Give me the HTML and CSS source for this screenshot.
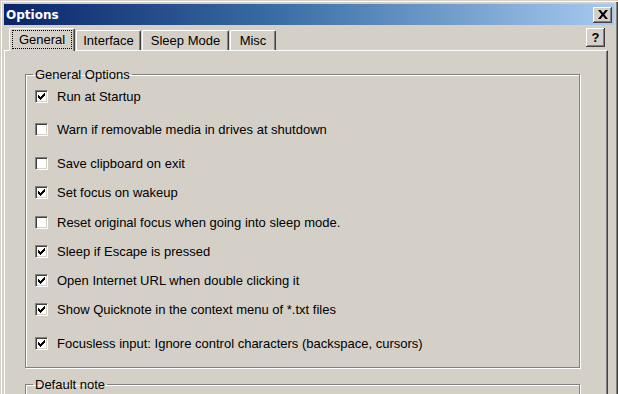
FILE: index.html
```html
<!DOCTYPE html>
<html>
<head>
<meta charset="utf-8">
<title>Options</title>
<link rel="stylesheet" href="styles.css">
</head>
<body>
<div class="window">
  <div class="titlebar">
    <span class="title">Options</span>
    <button class="tb-btn close" aria-label="Close">
      <svg width="10" height="9" viewBox="0 0 10 9"><path d="M0 0h2.6L5 3 7.4 0H10L6.4 4.5 10 9H7.4L5 6 2.6 9H0l3.6-4.5z" fill="#000"/></svg>
    </button>
  </div>
  <div class="client">
    <div class="tabrow">
      <div class="tab active tab-general"><span class="focus">General</span></div>
      <div class="tab tab-interface">Interface</div>
      <div class="tab tab-sleep">Sleep Mode</div>
      <div class="tab tab-misc">Misc</div>
      <button class="help" aria-label="Help">?</button>
    </div>
    <div class="panel">
      <fieldset class="group">
        <legend>General Options</legend>
        <div class="row"><span class="cb checked"><svg width="7" height="7" viewBox="0 0 7 7"><path d="M6 0H7V3H6V4H5V5H4V6H3V7H2V6H1V5H0V2H1V3H2V4H3V3H4V2H5V1H6Z" fill="#000"/></svg></span><span>Run at Startup</span></div>
        <div class="row sp4"><span class="cb"></span><span>Warn if removable media in drives at shutdown</span></div>
        <div class="row sp5"><span class="cb"></span><span>Save clipboard on exit</span></div>
        <div class="row"><span class="cb checked"><svg width="7" height="7" viewBox="0 0 7 7"><path d="M6 0H7V3H6V4H5V5H4V6H3V7H2V6H1V5H0V2H1V3H2V4H3V3H4V2H5V1H6Z" fill="#000"/></svg></span><span>Set focus on wakeup</span></div>
        <div class="row sp1"><span class="cb"></span><span>Reset original focus when going into sleep mode.</span></div>
        <div class="row"><span class="cb checked"><svg width="7" height="7" viewBox="0 0 7 7"><path d="M6 0H7V3H6V4H5V5H4V6H3V7H2V6H1V5H0V2H1V3H2V4H3V3H4V2H5V1H6Z" fill="#000"/></svg></span><span>Sleep if Escape is pressed</span></div>
        <div class="row"><span class="cb checked"><svg width="7" height="7" viewBox="0 0 7 7"><path d="M6 0H7V3H6V4H5V5H4V6H3V7H2V6H1V5H0V2H1V3H2V4H3V3H4V2H5V1H6Z" fill="#000"/></svg></span><span>Open Internet URL when double clicking it</span></div>
        <div class="row"><span class="cb checked"><svg width="7" height="7" viewBox="0 0 7 7"><path d="M6 0H7V3H6V4H5V5H4V6H3V7H2V6H1V5H0V2H1V3H2V4H3V3H4V2H5V1H6Z" fill="#000"/></svg></span><span>Show Quicknote in the context menu of *.txt files</span></div>
        <div class="row sp5"><span class="cb checked"><svg width="7" height="7" viewBox="0 0 7 7"><path d="M6 0H7V3H6V4H5V5H4V6H3V7H2V6H1V5H0V2H1V3H2V4H3V3H4V2H5V1H6Z" fill="#000"/></svg></span><span>Focusless input: Ignore control characters (backspace, cursors)</span></div>
      </fieldset>
      <fieldset class="group note">
        <legend>Default note</legend>
      </fieldset>
    </div>
  </div>
</div>
</body>
</html>
```
FILE: styles.css
```css
html, body {
  margin: 0;
  padding: 0;
  background: #d4d0c8;
}
body {
  font-family: "Liberation Sans", Arial, sans-serif;
  font-size: 13px;
  color: #000;
}
.window {
  width: 618px;
  height: 394px;
  box-sizing: border-box;
  padding: 4px 4px 0 4px;
  background: #d4d0c8;
  box-shadow: inset 1px 1px #d4d0c8, inset 2px 2px #fff, inset -1px 0 #404040, inset -2px 0 #808080;
  display: flex;
  flex-direction: column;
  overflow: hidden;
}
.titlebar {
  height: 21px;
  flex: none;
  display: flex;
  align-items: center;
  padding: 0 2px 0 2px;
  background: linear-gradient(to right, #0a246a 0%, #3a6ea5 45%, #a6caf0 100%);
}
.title {
  font-family: "DejaVu Sans", Verdana, sans-serif;
  font-weight: bold;
  font-size: 12px;
  color: #fff;
  flex: 1;
}
.tb-btn {
  width: 19px;
  height: 16px;
  padding: 0;
  margin: 0;
  border: 0;
  background: #d4d0c8;
  box-shadow: inset -1px -1px #404040, inset 1px 1px #fff, inset -2px -2px #808080;
  display: flex;
  align-items: center;
  justify-content: center;
}
.client {
  flex: 1;
  display: flex;
  flex-direction: column;
  margin-right: 6px;
}
.tabrow {
  height: 25px;
  flex: none;
  display: flex;
  align-items: flex-end;
  padding-left: 5px;
}
.tab {
  height: 20px;
  box-sizing: border-box;
  border-top: 1px solid #fff;
  border-left: 1px solid #fff;
  border-right: 1px solid #404040;
  border-radius: 2px 2px 0 0;
  box-shadow: inset -1px 0 #808080;
  display: flex;
  align-items: center;
  justify-content: center;
  padding-bottom: 1px;
  margin-right: 1px;
}
.tab.active {
  height: 23px;
  margin-bottom: -1px;
  position: relative;
  z-index: 1;
  background: #d4d0c8;
  padding-bottom: 2px;
}
.focus {
  outline: 1px dotted #000;
  outline-offset: 0;
  padding: 1px 6px 1px 6px;
}
.tab-general { width: 66px; }
.tab-interface { width: 65px; }
.tab-sleep { width: 87px; }
.tab-misc { width: 46px; }
.help {
  margin-left: auto;
  margin-right: 3px;
  margin-bottom: 3px;
  width: 19px;
  height: 19px;
  padding: 0;
  border: 0;
  background: #d4d0c8;
  box-shadow: inset -1px -1px #404040, inset 1px 1px #fff, inset -2px -2px #808080;
  font-family: "Liberation Sans", Arial, sans-serif;
  font-weight: bold;
  font-size: 13px;
  line-height: 19px;
  color: #000;
}
.panel {
  flex: 1;
  border-top: 1px solid #fff;
  border-left: 1px solid #fff;
  border-right: 1px solid #404040;
  box-shadow: inset -1px 0 #808080;
  padding: 16px 27px 0 20px;
}
.group {
  margin: 0;
  padding: 0 8px 9px 9px;
  border: 1px solid #808080;
  box-shadow: inset 1px 1px #fff, 1px 1px #fff;
}
.group legend {
  padding: 0 2px;
  margin-left: -2px;
  line-height: 15px;
}
.note {
  margin-top: 9px;
  height: 40px;
}
.row {
  height: 29px;
  display: flex;
  align-items: center;
  gap: 9px;
  white-space: nowrap;
}
.sp1 { margin-top: 1px; }
.sp4 { margin-top: 4px; }
.sp5 { margin-top: 5px; }
.cb {
  width: 13px;
  height: 13px;
  box-sizing: border-box;
  flex: none;
  border: 1px solid;
  border-color: #808080 #fff #fff #808080;
  background: #fff;
  box-shadow: inset 1px 1px #404040, inset -1px -1px #d4d0c8;
  display: flex;
  align-items: center;
  justify-content: center;
}
.cb svg {
  display: block;
}
```
